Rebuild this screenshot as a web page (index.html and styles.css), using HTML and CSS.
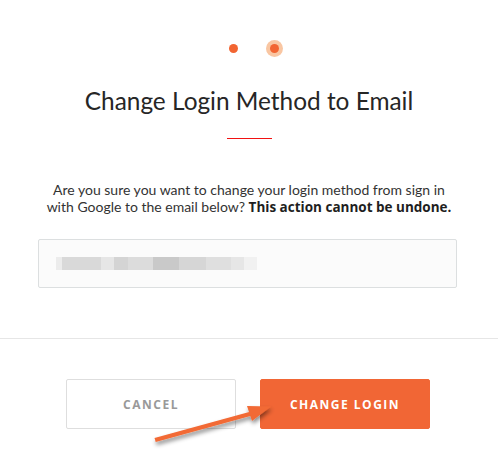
FILE: index.html
```html
<!DOCTYPE html>
<html lang="en">
<head>
<meta charset="utf-8">
<title>Change Login Method to Email</title>
<link rel="stylesheet" href="styles.css">
</head>
<body>
<div class="modal">
  <div class="steps">
    <span class="dot"></span>
    <span class="dot dot-active"><span class="dot-inner"></span></span>
  </div>
  <h1 class="title">Change Login Method to Email</h1>
  <div class="rule"></div>
  <p class="message">Are you sure you want to change your login method from sign in<br>with Google to the email below? <strong>This action cannot be undone.</strong></p>
  <div class="email-field"><span class="blurred"></span></div>
  <hr class="divider">
  <div class="actions">
    <button class="btn btn-cancel">CANCEL</button>
    <button class="btn btn-primary">CHANGE LOGIN</button>
  </div>
  <svg class="annotation" width="498" height="468" viewBox="0 0 498 468">
    <defs>
      <filter id="shadow" x="-20%" y="-50%" width="140%" height="200%">
        <feDropShadow dx="1" dy="3" stdDeviation="2" flood-color="#000" flood-opacity="0.45"/>
      </filter>
    </defs>
    <g filter="url(#shadow)" fill="#f26a35" stroke="none">
      <polygon points="154.5,438 251,411.5 252.2,415.6 155.7,442"/>
      <polygon points="247,406 271,406.5 252,421"/>
    </g>
  </svg>
</div>
</body>
</html>
```

FILE: styles.css
```css
html, body {
  margin: 0;
  padding: 0;
  background: #ffffff;
}

body {
  font-family: Lato, "Open Sans", Arial, sans-serif;
  color: #333333;
  width: 498px;
  height: 468px;
  overflow: hidden;
}

.modal {
  position: relative;
  width: 498px;
  height: 468px;
}

.steps {
  display: flex;
  justify-content: center;
  align-items: center;
  gap: 28px;
  height: 16px;
  padding-top: 40px;
  padding-left: 14px;
}

.dot {
  width: 9px;
  height: 9px;
  border-radius: 50%;
  background: #f26532;
}

.dot-active {
  width: 17px;
  height: 17px;
  background: #f9c6a2;
  display: flex;
  align-items: center;
  justify-content: center;
}

.dot-inner {
  width: 9px;
  height: 9px;
  border-radius: 50%;
  background: #f26532;
}

.title {
  margin: 31px 0 0;
  font-size: 24.4px;
  line-height: 28px;
  font-weight: 400;
  color: #262626;
  text-align: center;
}

.rule {
  width: 45px;
  height: 1px;
  background: #f11212;
  margin: 23px auto 0;
}

.message {
  margin: 42px 0 0;
  font-size: 14px;
  line-height: 17px;
  text-align: center;
  color: #333333;
}

.message strong {
  font-family: "Open Sans", Arial, sans-serif;
  font-weight: 700;
  font-size: 13.5px;
  color: #1e1e1e;
}

.email-field {
  margin: 23px 0 0 38px;
  width: 400px;
  height: 47px;
  border: 1px solid #dcdfe0;
  border-radius: 2px;
  background: #fbfbfb;
  display: flex;
  align-items: center;
  padding-left: 17px;
}

.blurred {
  display: block;
  width: 201px;
  height: 13px;
  background: linear-gradient(to right,
    #ececec 0px, #ececec 6px,
    #d9d9d9 6px, #d9d9d9 45px,
    #e6e6e6 45px, #e6e6e6 58px,
    #d4d4d4 58px, #d4d4d4 72px,
    #dcdcdc 72px, #dcdcdc 97px,
    #c9c9c9 97px, #c9c9c9 123px,
    #d6d6d6 123px, #d6d6d6 150px,
    #dfdfdf 150px, #dfdfdf 175px,
    #e6e6e6 175px, #e6e6e6 188px,
    #f1f1f1 188px, #f1f1f1 201px);
}

.divider {
  margin: 50px 0 0;
  border: 0;
  height: 1px;
  background: #e6e6e6;
}

.actions {
  display: flex;
  justify-content: center;
  gap: 24px;
  margin-top: 40px;
  padding-right: 2px;
}

.btn {
  width: 170px;
  height: 50px;
  border-radius: 2px;
  font-family: "Open Sans", Arial, sans-serif;
  font-weight: 700;
  font-size: 12px;
  letter-spacing: 1.5px;
  cursor: pointer;
  padding: 0;
}

.btn-cancel {
  background: #ffffff;
  border: 1px solid #dedede;
  color: #999999;
}

.btn-primary {
  background: #f16635;
  border: 1px solid #f16635;
  color: #ffffff;
}

.annotation {
  position: absolute;
  left: 0;
  top: 0;
  pointer-events: none;
}
```
